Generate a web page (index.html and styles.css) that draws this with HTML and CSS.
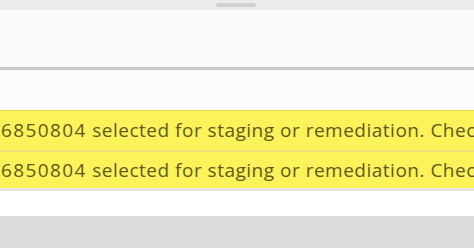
FILE: index.html
```html
<!DOCTYPE html>
<html>
<head>
<meta charset="utf-8">
<link rel="stylesheet" href="styles.css">
</head>
<body>
<div class="page">
  <div class="topbar"><div class="handle"></div></div>
  <div class="toolbar"></div>
  <div class="gap"></div>
  <div class="alerts">
    <div class="alert"><span class="num">6850804</span> selected for staging or remediation. Check</div>
    <div class="alert"><span class="num">6850804</span> selected for staging or remediation. Check</div>
  </div>
  <div class="blank"></div>
  <div class="footer"></div>
</div>
</body>
</html>
```
FILE: styles.css
```css
html, body { margin: 0; padding: 0; }
body { width: 474px; height: 248px; overflow: hidden; background: #ffffff; font-family: "Open Sans", "Liberation Sans", sans-serif; }
.page { display: flex; flex-direction: column; height: 248px; }
.topbar { height: 10px; background: #ececec; display: flex; justify-content: center; align-items: center; }
.handle { width: 40px; height: 4px; background: #d2d2d2; border-radius: 2px; margin-left: -2px; }
.toolbar { height: 57px; background: #f9f9f9; border-bottom: 3px solid #c9c9c9; }
.gap { height: 40px; background: #fbfbfb; }
.alerts { display: flex; flex-direction: column; }
.alert { height: 39px; background: #fcf259; color: #5f5a20; font-size: 19px; letter-spacing: 0.5px; line-height: 39px; white-space: nowrap; overflow: hidden; padding-left: 1px; border-top: 1px solid #e8dc48; }
.alert + .alert { border-top: 2px solid #eee37a; height: 36px; line-height: 36px; }
.num { letter-spacing: 1.4px; }
.blank { height: 25px; background: #ffffff; border-top: 3px solid #e2e2e2; }
.footer { flex: 1; background: #dcdcdc; }
```
